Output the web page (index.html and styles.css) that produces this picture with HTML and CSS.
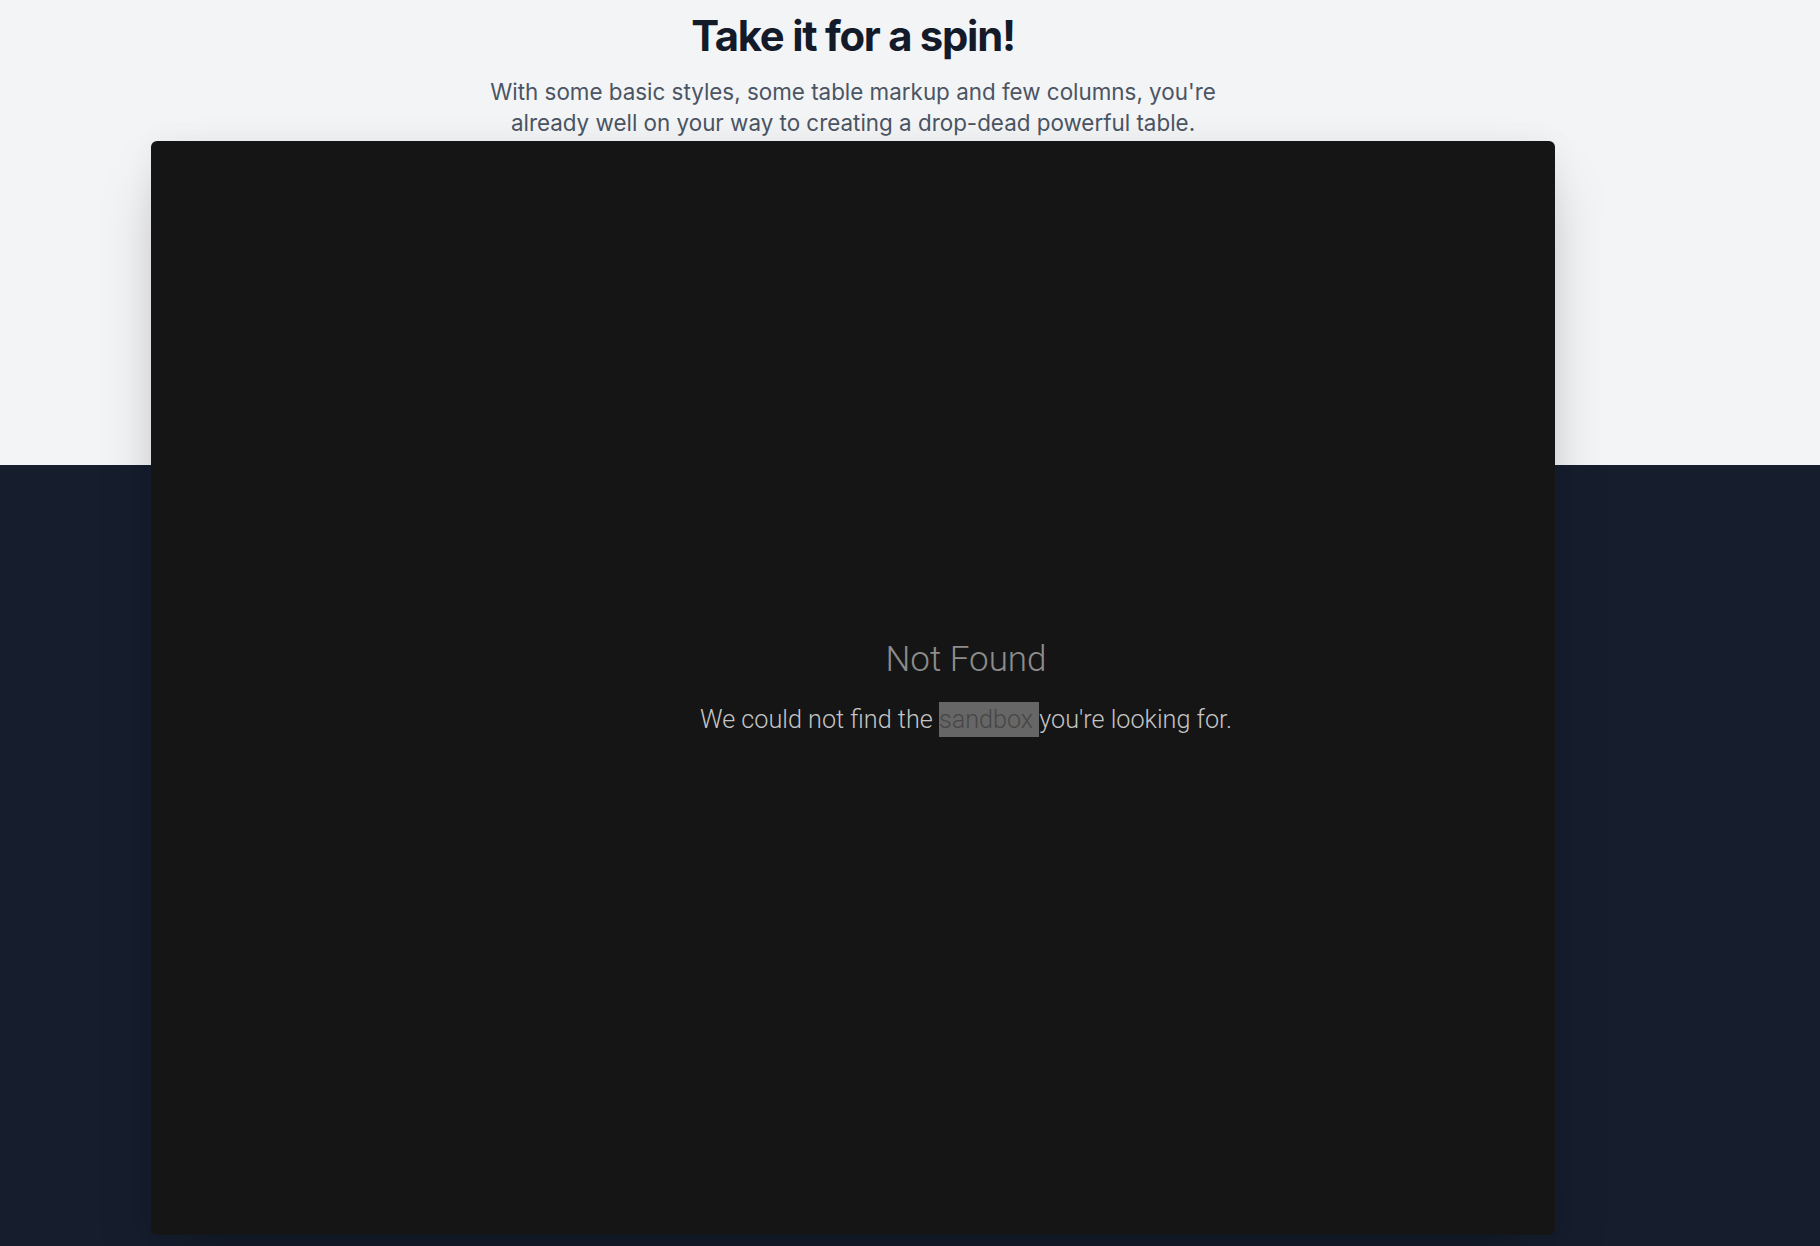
FILE: index.html
```html
<!DOCTYPE html>
<html lang="en">
<head>
<meta charset="utf-8">
<title>Take it for a spin!</title>
<link rel="stylesheet" href="styles.css">
</head>
<body>
<main class="page">
  <section class="spin">
    <h2 class="spin-title">Take it for a spin!</h2>
    <p class="spin-lead">With some basic styles, some table markup and few columns, you're already well on your way to creating a drop-dead powerful table.</p>
    <div class="sandbox-card">
      <div class="not-found">
        <h1 class="nf-title">Not Found</h1>
        <p class="nf-text">We could not find the <span class="nf-mark">sandbox </span>you're looking for.</p>
      </div>
    </div>
  </section>
</main>
</body>
</html>
```
FILE: styles.css
```css
html {
  background: #161e2e;
}
body {
  margin: 0;
}
.page {
  min-height: 100vh;
  background: linear-gradient(to bottom, #f3f4f6 0, #f3f4f6 465px, #161e2e 465px, #161e2e 100%);
  padding-bottom: 11px;
  box-sizing: border-box;
}
.spin {
  width: 1404px;
  margin-left: 151px;
  padding-top: 13px;
  display: flex;
  flex-direction: column;
  align-items: center;
}
.spin-title {
  margin: 0;
  font-family: Inter, "Liberation Sans", sans-serif;
  font-weight: 700;
  font-size: 41.8px;
  line-height: 46.4px;
  letter-spacing: -0.03em;
  color: #131a2a;
  text-align: center;
}
.spin-lead {
  margin: 17px 0 0;
  width: 740px;
  font-family: Inter, "Liberation Sans", sans-serif;
  font-weight: 400;
  font-size: 22.4px;
  line-height: 31px;
  color: #4b5563;
  text-align: center;
}
.sandbox-card {
  margin-top: 3px;
  width: 1404px;
  height: 1094px;
  background: #151515;
  border-radius: 6px;
  box-shadow: 0 29px 58px -14px rgba(0, 0, 0, 0.25), 0 0 30px rgba(0, 0, 0, 0.04);
  display: flex;
  overflow: hidden;
}
.not-found {
  flex: 1;
  padding-left: 226px;
  display: flex;
  flex-direction: column;
  align-items: center;
  justify-content: center;
  font-family: Roboto, "Liberation Sans", sans-serif;
}
.nf-title {
  margin: 0;
  font-size: 35px;
  line-height: 42px;
  font-weight: 300;
  color: #8c8c8c;
}
.nf-text {
  margin: 21px 0 0;
  font-size: 25.2px;
  line-height: 35px;
  font-weight: 300;
  color: #c4c4c4;
}
.nf-mark {
  background: #666666;
  color: #464646;
  padding: 3px 0 3px;
}
```
